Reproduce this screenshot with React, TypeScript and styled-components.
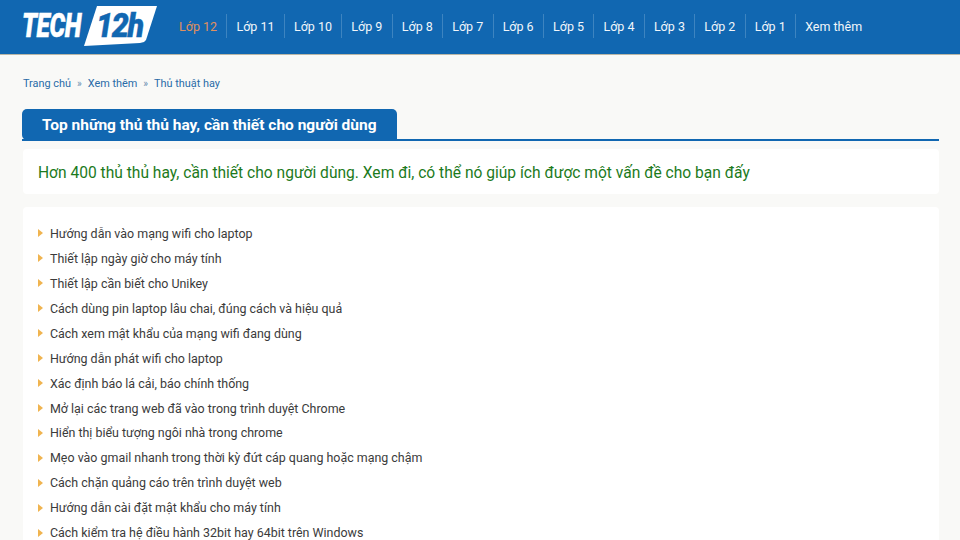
import React from "react";
import styled, { createGlobalStyle } from "styled-components";

const Global = createGlobalStyle`
  html, body { margin: 0; padding: 0; height: 540px; overflow: hidden; background: #f9f9f7; }
  body { font-family: Roboto, "Liberation Sans", sans-serif; }
`;
const Page = styled.div`width: 960px; height: 540px; overflow: hidden;`;
const Header = styled.header`
  height: 54px; background: #1167b1; border-bottom: 1px solid #b9b6a6;
  display: flex; align-items: flex-start; padding-left: 22px;
`;
const Logo = styled.div`
  width: 136px; height: 40px; margin-top: 6px; display: flex; align-items: center;
  color: #fff; font-style: italic; font-weight: 900; flex: none;
`;
const LogoTech = styled.span`
  font-size: 33px; line-height: 40px; letter-spacing: -0.5px; transform: scaleX(0.74); transform-origin: left;
  width: 62px; flex: none; white-space: nowrap; -webkit-text-stroke: 0.5px #fff;
`;
const LogoBadge = styled.span`
  width: 73px; height: 40px; background: #fff; color: #1167b1; overflow: hidden;
  clip-path: polygon(13px 0, 100% 0, 62px 34px, 60px 36px, 56px 37px, 0 100%, 0 100%);
  display: flex; align-items: center; justify-content: center; padding-right: 3px; box-sizing: border-box;
`;
const LogoNum = styled.span`
  font-size: 33px; letter-spacing: -1.5px; transform: scaleX(0.92); white-space: nowrap; line-height: 40px;
  -webkit-text-stroke: 0.4px #1167b1;
`;
const Nav = styled.nav`display: flex; margin: 14px 0 0 12px;`;
const NavItem = styled.a<{ $active?: boolean; $last?: boolean }>`
  display: block; height: 24px; line-height: 25px; font-size: 12.5px; padding: 0 9.4px 0 9px; white-space: nowrap;
  color: ${p => (p.$active ? "#e0905e" : "#f2f6fa")};
  border-right: ${p => (p.$last ? "none" : "1px solid #3d84c0")};
`;
const Crumbs = styled.div`
  display: flex; gap: 6px; padding: 22px 0 0 23px; height: 33px; font-size: 10.9px; line-height: 14px; color: #2a6ca8;
`;
const Sep = styled.span`color: #6a8fb0; font-size: 10px;`;
const TitleBar = styled.div`margin: -1px 21px 0 22px; border-bottom: 2px solid #1167b1; height: 30px;`;
const Title = styled.h1`
  margin: 0; width: 375px; height: 31px; background: #1167b1; color: #fff; border-radius: 5px 5px 0 5px;
  font-size: 15.5px; font-weight: 700; line-height: 33px; padding-left: 20px; box-sizing: border-box;
`;
const Card = styled.section`background: #fff; margin: 0 21px 0 23px; border-radius: 4px;`;
const Intro = styled(Card)`
  margin-top: 8px; height: 45px; padding-left: 15px; color: #1c7a1c; font-size: 15.58px; line-height: 48px; white-space: nowrap;
`;
const ListCard = styled(Card)`margin-top: 13px; padding: 14px 0 0 15px; height: 400px;`;
const List = styled.ul`margin: 0; padding: 0; list-style: none;`;
const Item = styled.li`
  display: flex; align-items: center; gap: 7px; height: 24.95px; font-size: 12.45px; color: #3b3b3b;
`;
const Arrow = styled.span`
  width: 0; height: 0; flex: none; border-left: 5px solid #f0b450; border-top: 4px solid transparent; border-bottom: 4px solid transparent;
`;

const classes = ["Lớp 12","Lớp 11","Lớp 10","Lớp 9","Lớp 8","Lớp 7","Lớp 6","Lớp 5","Lớp 4","Lớp 3","Lớp 2","Lớp 1","Xem thêm"];
const items = [
  "Hướng dẫn vào mạng wifi cho laptop",
  "Thiết lập ngày giờ cho máy tính",
  "Thiết lập cần biết cho Unikey",
  "Cách dùng pin laptop lâu chai, đúng cách và hiệu quả",
  "Cách xem mật khẩu của mạng wifi đang dùng",
  "Hướng dẫn phát wifi cho laptop",
  "Xác định báo lá cải, báo chính thống",
  "Mở lại các trang web đã vào trong trình duyệt Chrome",
  "Hiển thị biểu tượng ngôi nhà trong chrome",
  "Mẹo vào gmail nhanh trong thời kỳ đứt cáp quang hoặc mạng chậm",
  "Cách chặn quảng cáo trên trình duyệt web",
  "Hướng dẫn cài đặt mật khẩu cho máy tính",
  "Cách kiểm tra hệ điều hành 32bit hay 64bit trên Windows",
];

export default function App() {
  return (
    <Page>
      <Global />
      <Header>
        <Logo>
          <LogoTech>TECH</LogoTech>
          <LogoBadge><LogoNum>12h</LogoNum></LogoBadge>
        </Logo>
        <Nav>
          {classes.map((c, i) => (
            <NavItem key={c} $active={i === 0} $last={i === classes.length - 1}>{c}</NavItem>
          ))}
        </Nav>
      </Header>
      <Crumbs>
        <span>Trang chủ</span><Sep>»</Sep><span>Xem thêm</span><Sep>»</Sep><span>Thủ thuật hay</span>
      </Crumbs>
      <TitleBar><Title>Top những thủ thủ hay, cần thiết cho người dùng</Title></TitleBar>
      <Intro>Hơn 400 thủ thủ hay, cần thiết cho người dùng. Xem đi, có thể nó giúp ích được một vấn đề cho bạn đấy</Intro>
      <ListCard>
        <List>
          {items.map(t => <Item key={t}><Arrow />{t}</Item>)}
        </List>
      </ListCard>
    </Page>
  );
}
